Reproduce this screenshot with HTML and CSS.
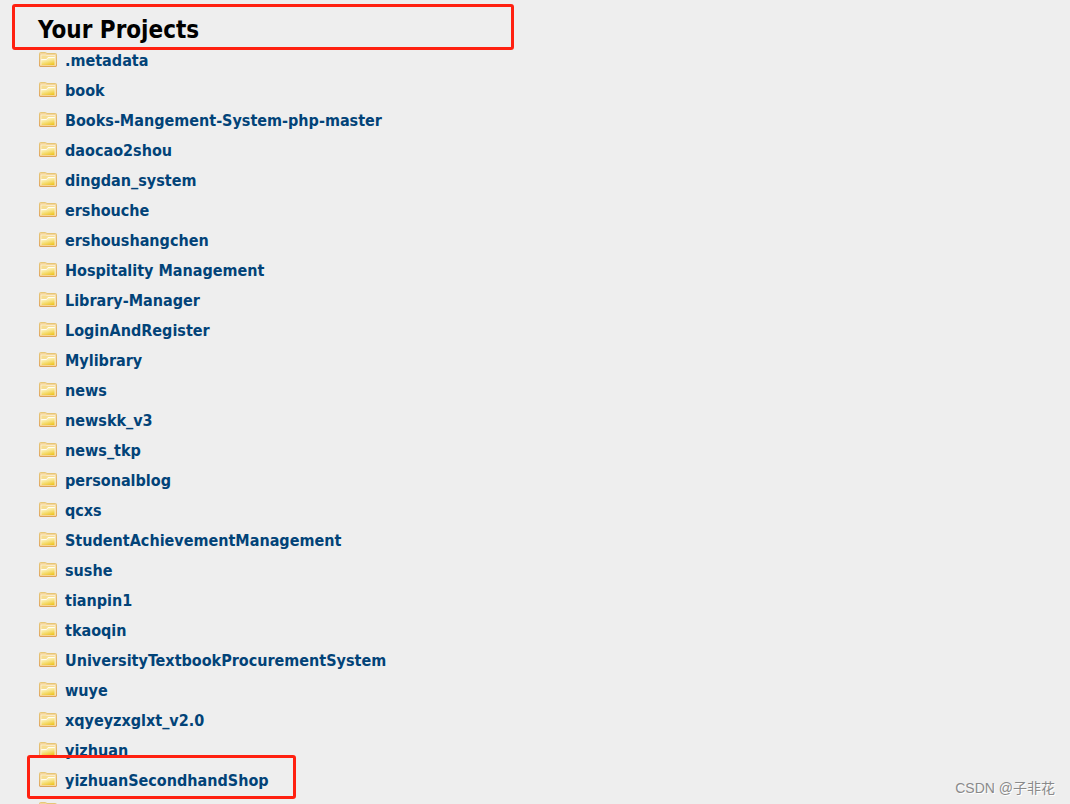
FILE: index.html
```
<!DOCTYPE html>
<html lang="en">
<head>
<meta charset="utf-8">
<title>Your Projects</title>
<link rel="stylesheet" href="styles.css">
</head>
<body>
<svg class="defs" aria-hidden="true">
  <defs>
    <linearGradient id="fill" x1=".2" y1="0" x2=".7" y2="1"><stop offset="0" stop-color="#fffbe6"/><stop offset=".5" stop-color="#f7e48c"/><stop offset="1" stop-color="#efc628"/></linearGradient>
    <linearGradient id="edge" x1="0" y1="0" x2="0" y2="1"><stop offset="0" stop-color="#e6c878"/><stop offset="1" stop-color="#e0a560"/></linearGradient>
    <symbol id="folder" viewBox="0 0 18 16">
      <path d="M.5 14V1.500Q.5 .5 1.500 .5H6.500L8 1.500H16.500Q17.500 1.500 17.500 2.500V14Q17.500 14.500 16.500 14.500H1.500Q.5 14.500 .5 14Z" fill="#f4d49a" stroke="url(#edge)"/>
      <path d="M2 13V3H6.500L8 4H16V13Z" fill="#f6dd92"/>
      <path d="M2 13V7.500H7.500L9 5.500H16V13Z" fill="url(#fill)"/>
      <path d="M2 7.500H7.500L9 5.500H16" fill="none" stroke="#fffdf2"/>
      <path d="M2 13V3H6.500L8 3.500H16V13" fill="none" stroke="#fdf3d4" stroke-width=".8"/>
      <path d="M1 14.500H17" stroke="#dca35e"/>
    </symbol>
  </defs>
</svg>
<main class="page">
  <h1 class="title">Your Projects</h1>
  <ul class="projects" id="projects"></ul>
</main>
<div class="watermark">CSDN @子非花</div>
<script src="projects.js"></script>
</body>
</html>
```
FILE: styles.css
```
html {
  height: 100%;
  overflow: hidden;
}
body {
  height: 100%;
  margin: 0;
  overflow: hidden;
  background: #eeeeee;
  font-family: "DejaVu Sans Condensed", "DejaVu Sans", sans-serif;
  font-stretch: condensed;
}
.defs {
  position: absolute;
  width: 0;
  height: 0;
}
.page {
  padding: 15px 38px 0;
}
.title {
  position: relative;
  margin: 0;
  font-size: 24px;
  line-height: 30px;
  color: #000;
}
.title::after,
.marked::after {
  content: "";
  position: absolute;
  box-sizing: border-box;
  border: 3px solid #ff2010;
  border-radius: 3px;
}
.title::after {
  left: -26px;
  top: -11px;
  width: 502px;
  height: 46px;
}
.projects {
  margin: 0;
  padding: 0;
  list-style: none;
}
.project {
  position: relative;
  display: flex;
  align-items: center;
  gap: 8px;
  height: 30px;
  padding-left: 1px;
}
.marked::after {
  left: -11px;
  top: -10px;
  width: 269px;
  height: 44px;
}
.icon {
  width: 18px;
  height: 16px;
}
.link {
  padding-top: 1px;
  color: #024378;
  font-size: 16px;
  font-weight: bold;
  line-height: 28px;
  text-decoration: none;
}
.watermark {
  position: absolute;
  right: 15px;
  bottom: 6px;
  color: #8a8a8a;
  font-family: "Liberation Sans", "Noto Sans CJK SC", sans-serif;
  font-size: 14px;
  line-height: 20px;
  text-shadow: 1px 1px 0 #fff;
}
```
FILE: projects.js
```
const names = [".metadata", "book", "Books-Mangement-System-php-master", "daocao2shou", "dingdan_system", "ershouche", "ershoushangchen", "Hospitality Management", "Library-Manager", "LoginAndRegister", "Mylibrary", "news", "newskk_v3", "news_tkp", "personalblog", "qcxs", "StudentAchievementManagement", "sushe", "tianpin1", "tkaoqin", "UniversityTextbookProcurementSystem", "wuye", "xqyeyzxglxt_v2.0", "yizhuan", "yizhuanSecondhandShop", "dididididi_ididididi"];
const marked = "yizhuanSecondhandShop";
document.getElementById("projects").innerHTML = names.map(name =>
  `<li class="project${name === marked ? " marked" : ""}"><svg class="icon" aria-hidden="true"><use href="#folder"/></svg><a class="link" href="#">${name}</a></li>`
).join("");
```
